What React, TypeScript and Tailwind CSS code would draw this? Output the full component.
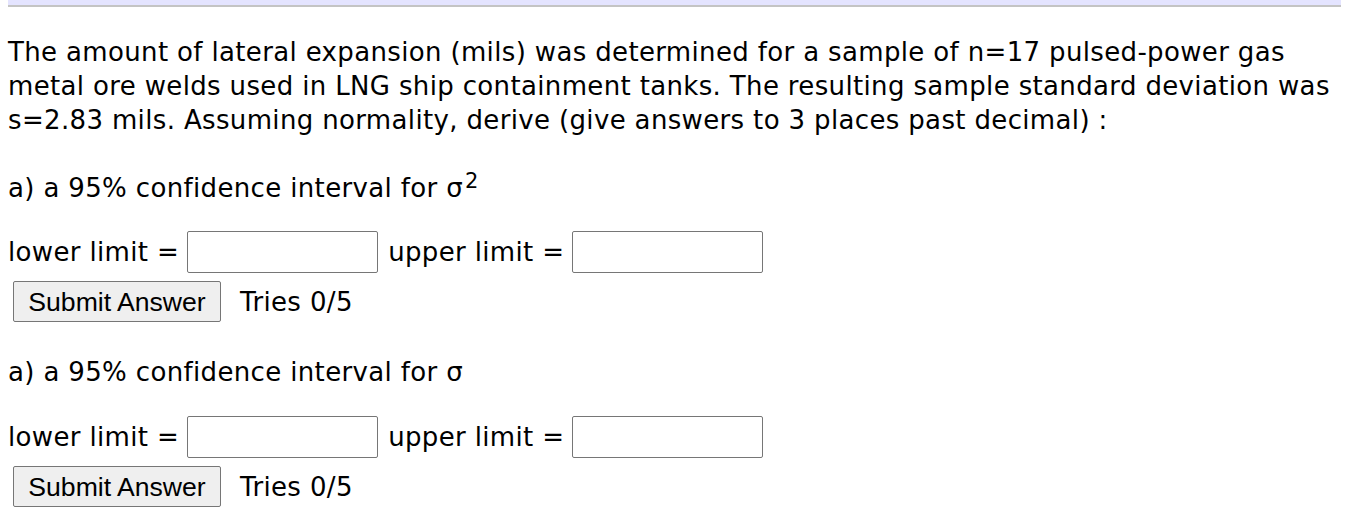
const font = { fontFamily: "Verdana, 'DejaVu Sans', sans-serif" };

function Row() {
  return (
    <div className="flex flex-col">
      <div className="flex items-center h-[42px]">
        <span>lower limit =</span>
        <input
          type="text"
          className="ml-[8px] w-[191px] h-[42px] border border-[#767676] rounded-[2px] bg-white"
        />
        <span className="ml-[10px]">upper limit =</span>
        <input
          type="text"
          className="ml-[8px] w-[191px] h-[42px] border border-[#767676] rounded-[2px] bg-white"
        />
      </div>
      <div className="flex items-center mt-[8px] h-[41px]">
        <button className="ml-[5px] w-[208px] h-[41px] bg-[#efefef] border border-[#767676] rounded-[2px] text-[26.6px] tracking-normal font-['Liberation_Sans',Arial,sans-serif] text-black">
          Submit Answer
        </button>
        <span className="ml-[19px]">Tries 0/5</span>
      </div>
    </div>
  );
}

export default function App() {
  return (
    <div
      className="bg-white min-h-[532px] px-[8px] text-black text-[26px] tracking-[0.35px] leading-[34px]"
      style={font}
    >
      <div className="h-[5px] bg-[#e4e4ff]" />
      <div className="h-[2px] bg-[#c4c4c4]" />
      <p className="mt-[28px] whitespace-nowrap">
        The amount of lateral expansion (mils) was determined for a sample of n=17 pulsed-power gas
        <br />
        metal ore welds used in LNG ship containment tanks. The resulting sample standard deviation was
        <br />
        s=2.83 mils. Assuming normality, derive (give answers to 3 places past decimal) :
      </p>
      <p className="mt-[34px]">
        a) a 95% confidence interval for σ
        <sup className="ml-[2px] text-[21px] relative top-[-9px]">2</sup>
      </p>
      <div className="mt-[26px]">
        <Row />
      </div>
      <p className="mt-[33px]">a) a 95% confidence interval for σ</p>
      <div className="mt-[27px]">
        <Row />
      </div>
    </div>
  );
}
